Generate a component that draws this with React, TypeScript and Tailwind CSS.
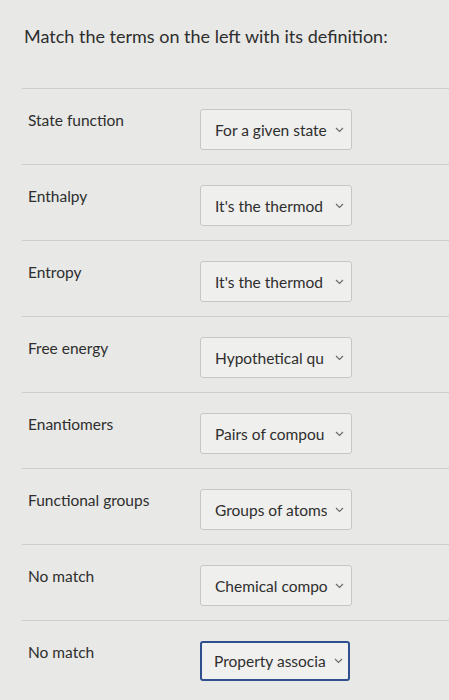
import React from "react";

const rows = [
  { term: "State function", answer: "For a given state" },
  { term: "Enthalpy", answer: "It's the thermod" },
  { term: "Entropy", answer: "It's the thermod" },
  { term: "Free energy", answer: "Hypothetical qu" },
  { term: "Enantiomers", answer: "Pairs of compou" },
  { term: "Functional groups", answer: "Groups of atoms" },
  { term: "No match", answer: "Chemical compo" },
  { term: "No match", answer: "Property associa" },
];

const Chevron = () => (
  <svg width="9" height="6" viewBox="0 0 9 6" className="shrink-0">
    <path d="M1 1l3.5 3.5L8 1" fill="none" stroke="#6b6b6b" strokeWidth="1.2" />
  </svg>
);

const App = () => {
  return (
    <div className="min-h-[700px] bg-[#e8e8e6] font-['Lato',sans-serif] text-[#2e2e2e]">
      <h1 className="pl-6 pt-6 text-[18px] leading-6">
        Match the terms on the left with its definition:
      </h1>
      <div className="mt-10 ml-[22px]">
        {rows.map((row, i) => (
          <div
            key={i}
            className="flex border-t border-[#cdcdcb] pt-5 pb-[14px]"
          >
            <p className="w-[178px] pl-[6px] pt-[1px] text-[15.5px] leading-5">
              {row.term}
            </p>
            <div
              className={
                i === 7
                  ? "flex h-[40px] w-[150px] items-center justify-between rounded-[3px] border-2 border-[#2f4f8f] bg-[#f0f0ee] pl-[12px] pr-[5px]"
                  : "flex h-[41px] w-[152px] items-center justify-between rounded-[3px] border border-[#c6c6c4] bg-[#efefed] pl-[14px] pr-[7px]"
              }
            >
              <span className="overflow-hidden whitespace-nowrap text-[15.5px] leading-5">
                {row.answer}
              </span>
              <Chevron />
            </div>
          </div>
        ))}
      </div>
    </div>
  );
};

export default App;
